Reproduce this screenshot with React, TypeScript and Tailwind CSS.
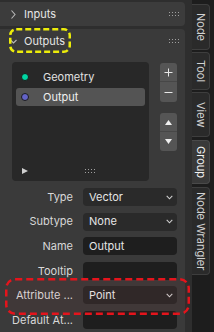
import React from "react";

function Grip() {
  return (
    <div className="grid grid-cols-4 gap-x-[2px] gap-y-[2px]">
      {Array.from({ length: 8 }).map((_, i) => (
        <span key={i} className="w-[1px] h-[1px] bg-[#a0a0a0]" />
      ))}
    </div>
  );
}

function Chevron({ open }: { open: boolean }) {
  return (
    <svg width="7" height="9" viewBox="0 0 7 9" className="shrink-0">
      {open ? (
        <polyline points="0.5,3 3.5,6 6.5,3" fill="none" stroke="#b8b8b8" strokeWidth="1.1" />
      ) : (
        <polyline points="1.5,0.5 5,4.5 1.5,8.5" fill="none" stroke="#b8b8b8" strokeWidth="1.1" />
      )}
    </svg>
  );
}

function PanelHeader({ label, open }: { label: string; open: boolean }) {
  return (
    <div className="flex items-center h-[24px] pl-[10px] pr-[6px]">
      <Chevron open={open} />
      <span className="ml-[7px] text-[11px] text-[#e6e6e6]">{label}</span>
      <div className="ml-auto">
        <Grip />
      </div>
    </div>
  );
}

function Caret() {
  return (
    <svg width="7" height="5" viewBox="0 0 7 5" className="ml-auto">
      <polyline points="0.7,0.8 3.5,3.8 6.3,0.8" fill="none" stroke="#cfcfcf" strokeWidth="1.1" />
    </svg>
  );
}

type Prop = { label: string; value?: string; kind: "menu" | "text" };

const props: Prop[] = [
  { label: "Type", value: "Vector", kind: "menu" },
  { label: "Subtype", value: "None", kind: "menu" },
  { label: "Name", value: "Output", kind: "text" },
  { label: "Tooltip", value: "", kind: "text" },
  { label: "Attribute ...", value: "Point", kind: "menu" },
  { label: "Default At...", value: "", kind: "text" },
];

const tabs = [
  { label: "Node", h: "h-[46px]", mt: "mt-[4px]" },
  { label: "Tool", h: "h-[38px]", mt: "mt-[2px]" },
  { label: "View", h: "h-[45px]", mt: "mt-[2px]" },
  { label: "Group", h: "h-[44px]", mt: "mt-[3px]", active: true },
  { label: "Node Wrangler", h: "h-[88px]", mt: "mt-[3px]" },
];

export default function App() {
  return (
    <div className="relative w-[214px] h-[332px] overflow-hidden bg-[#2e2e2e] flex font-['Inter','Noto_Sans',sans-serif] select-none">
      {/* properties region */}
      <div className="w-[192px] shrink-0 flex flex-col pt-[2px] gap-[3px]">
        <div className="w-[185px] bg-[#3c3c3c] rounded-r-[4px]">
          <PanelHeader label="Inputs" open={false} />
        </div>
        <div className="w-[185px] flex-1 bg-[#3a3a3a] rounded-tr-[4px]">
          <PanelHeader label="Outputs" open />

          <div className="flex pl-[12px] pt-[9px]">
            {/* list */}
            <div className="w-[137px] h-[119px] bg-[#282828] rounded-[4px] flex flex-col px-[4px] pt-[6px] pb-[6px]">
              <div className="flex items-center h-[18px] pl-[5px] rounded-[3px]">
                <span className="w-[8px] h-[8px] rounded-full bg-[#00d6a3] border border-[#1a1a1a]" />
                <span className="ml-[14px] text-[11px] text-[#e0e0e0]">Geometry</span>
              </div>
              <div className="flex items-center h-[18px] pl-[5px] mt-[2px] rounded-[3px] bg-[#545454]">
                <span className="w-[8px] h-[8px] rounded-full bg-[#6363c7] border border-[#1a1a1a]" />
                <span className="ml-[14px] text-[11px] text-[#f0f0f0]">Output</span>
              </div>
              <div className="mt-auto flex items-center h-[8px] pl-[6px]">
                <svg width="6" height="6" viewBox="0 0 6 6">
                  <polygon points="0,0 6,3 0,6" fill="#d0d0d0" />
                </svg>
                <div className="ml-[57px]">
                  <Grip />
                </div>
              </div>
            </div>

            {/* side buttons */}
            <div className="ml-[11px] pt-[1px] flex flex-col">
              <div className="w-[17px] rounded-[3px] bg-[#555555] flex flex-col overflow-hidden">
                <div className="h-[19px] flex items-center justify-center border-b border-[#474747]">
                  <svg width="9" height="9" viewBox="0 0 9 9">
                    <line x1="4.5" y1="0.5" x2="4.5" y2="8.5" stroke="#e8e8e8" strokeWidth="1" />
                    <line x1="0.5" y1="4.5" x2="8.5" y2="4.5" stroke="#e8e8e8" strokeWidth="1" />
                  </svg>
                </div>
                <div className="h-[20px] flex items-center justify-center">
                  <svg width="9" height="9" viewBox="0 0 9 9">
                    <line x1="0.5" y1="4.5" x2="8.5" y2="4.5" stroke="#e8e8e8" strokeWidth="1" />
                  </svg>
                </div>
              </div>
              <div className="mt-[11px] w-[17px] rounded-[3px] bg-[#555555] flex flex-col overflow-hidden">
                <div className="h-[19px] flex items-center justify-center border-b border-[#474747]">
                  <svg width="7" height="5" viewBox="0 0 7 5">
                    <polygon points="0,5 3.5,0 7,5" fill="#f0f0f0" />
                  </svg>
                </div>
                <div className="h-[19px] flex items-center justify-center">
                  <svg width="7" height="5" viewBox="0 0 7 5">
                    <polygon points="0,0 7,0 3.5,5" fill="#f0f0f0" />
                  </svg>
                </div>
              </div>
            </div>
          </div>

          {/* properties */}
          <div className="mt-[7px] flex flex-col gap-[6.6px]">
            {props.map((p) => (
              <div key={p.label} className="flex items-center h-[18px]">
                <span className="w-[73px] text-right text-[11px] text-[#d8d8d8] whitespace-nowrap">{p.label}</span>
                <div
                  className={
                    p.kind === "menu"
                      ? "ml-[10px] w-[94px] h-full rounded-[4px] bg-[#2a2a2a] flex items-center pl-[6px] pr-[4px]"
                      : "ml-[10px] w-[94px] h-full rounded-[4px] bg-[#1e1e1e] flex items-center pl-[6px] pr-[4px]"
                  }
                >
                  <span className="text-[11px] text-[#e6e6e6]">{p.value}</span>
                  {p.kind === "menu" && <Caret />}
                </div>
              </div>
            ))}
          </div>
        </div>
      </div>

      {/* tab strip */}
      <div className="flex-1 bg-[#1d1d1d] flex flex-col">
        {tabs.map((t) => (
          <div
            key={t.label}
            className={`${t.h} ${t.mt} w-[18px] rounded-r-[4px] border border-l-0 flex items-center justify-center ${
              t.active ? "bg-[#393939] border-[#4a4a4a] text-[#f2f2f2]" : "bg-[#2a2a2a] border-[#3e3e3e] text-[#d2d2d2]"
            }`}
          >
            <span className="[writing-mode:vertical-rl] text-[11px] leading-none whitespace-nowrap">{t.label}</span>
          </div>
        ))}
      </div>

      {/* annotation overlays */}
      <svg className="absolute left-[9px] top-[28px]" width="62" height="25" viewBox="0 0 62 25">
        <rect x="1.25" y="1.25" width="59.5" height="22.5" rx="6" fill="none" stroke="#ecec0a" strokeWidth="2.5" strokeDasharray="6 3" />
      </svg>
      <svg className="absolute left-[5px] top-[278px]" width="185" height="37" viewBox="0 0 185 37">
        <rect x="1.25" y="1.25" width="182.5" height="34.5" rx="9" fill="rgba(255,0,0,0.03)" stroke="#e4141c" strokeWidth="2.5" strokeDasharray="7 4" />
      </svg>
    </div>
  );
}
